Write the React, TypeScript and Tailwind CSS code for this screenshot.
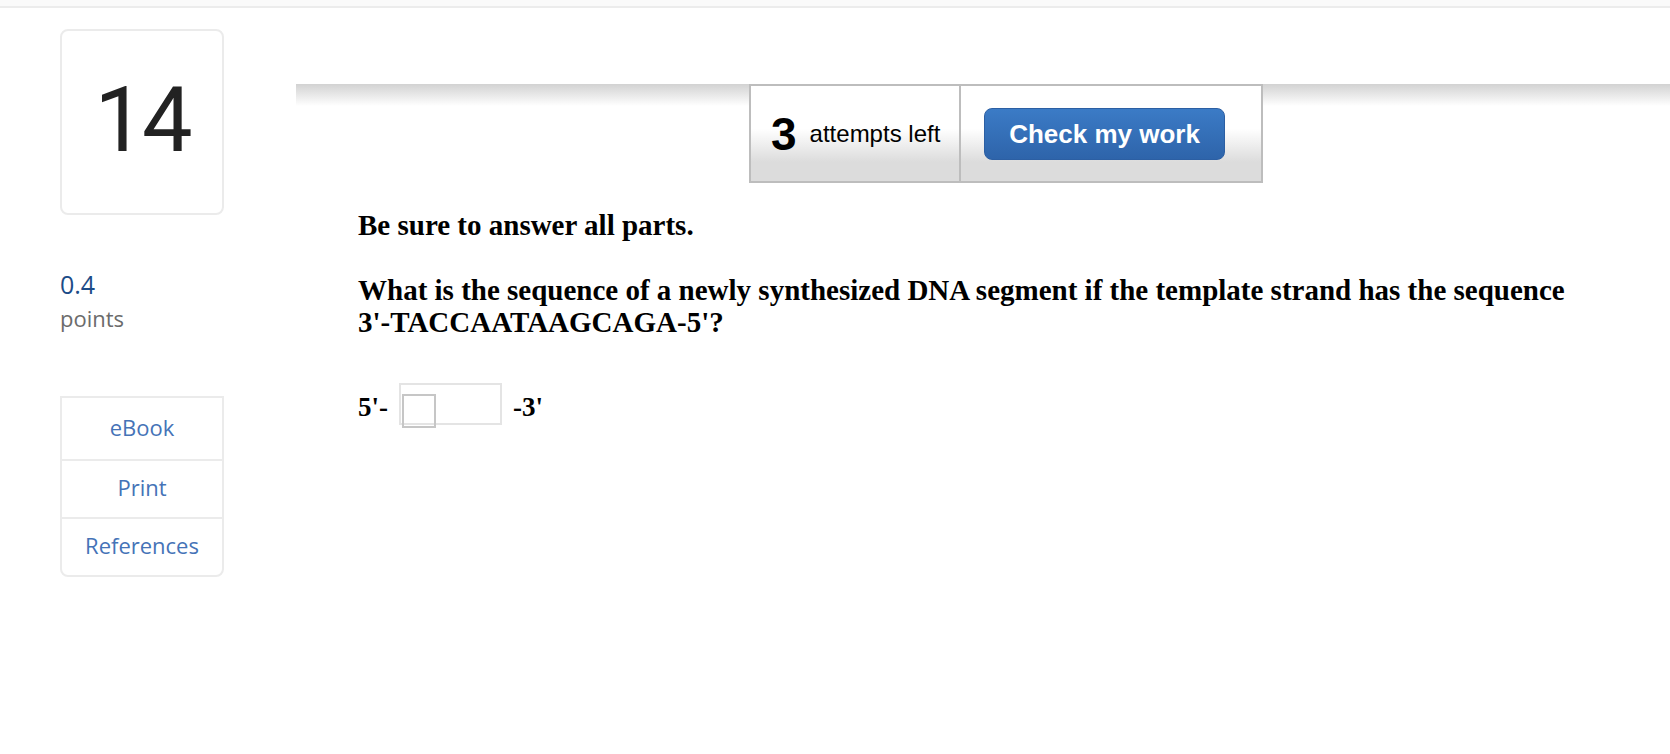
import React from 'react';

const sideFont = { fontFamily: '"Open Sans", "Noto Sans", sans-serif' };
const numFont = { fontFamily: 'Roboto, "Open Sans", sans-serif' };
const arial = { fontFamily: '"Liberation Sans", Arial, sans-serif' };
const times = { fontFamily: '"Liberation Serif", "Times New Roman", serif' };

const SideLinks: React.FC = () => {
  const links = [
    { label: 'eBook', h: 'h-[61px]' },
    { label: 'Print', h: 'h-[58px]' },
    { label: 'References', h: 'h-[58px]' },
  ];
  return (
    <div className="w-[164px] border-2 border-[#ebebeb] rounded-b-lg">
      {links.map((l, i) => (
        <div
          key={l.label}
          className={`${l.h} flex items-center justify-center pb-[3px] text-[22px] text-[#4573b7] ${i > 0 ? 'border-t-2 border-[#ebebeb]' : ''}`}
          style={sideFont}
        >
          {l.label}
        </div>
      ))}
    </div>
  );
};

export default function App() {
  return (
    <div className="min-h-screen w-full bg-white">
      {/* top strip */}
      <div className="h-[8px] bg-[#fafafa] border-b-2 border-[#ececec]" />

      <div className="flex">
        {/* left column */}
        <div className="ml-[60px] pt-[21px] w-[164px] shrink-0">
          <div className="h-[186px] w-[164px] rounded-lg border-2 border-[#ebebeb] flex items-center justify-center">
            <span className="text-[90px] font-normal leading-none tracking-[-3px] text-[#222] -mt-[2px]" style={numFont}>
              14
            </span>
          </div>
          <div className="mt-[54px] text-[25px] leading-[30px] text-[#1c4b87]" style={sideFont}>
            0.4
          </div>
          <div className="mt-[4px] text-[22px] leading-[30px] text-[#6b6b6b]" style={sideFont}>
            points
          </div>
          <div className="mt-[63px]">
            <SideLinks />
          </div>
        </div>

        {/* main column */}
        <div className="ml-[72px] flex-1 pt-[76px]">
          <div className="bg-[linear-gradient(to_bottom,#d2d2d2,#ffffff_22px)] pl-[453px]">
            <div className="flex h-[99px]">
              <div className="w-[212px] border-2 border-[#bdbdbd] bg-[linear-gradient(to_bottom,#ffffff_45%,#dcdcdc_80%)] flex items-center pl-[20px]" style={arial}>
                <span className="text-[46px] font-bold leading-none text-black">3</span>
                <span className="ml-[13px] text-[24px] text-black">attempts left</span>
              </div>
              <div className="w-[302px] border-2 border-l-0 border-[#bdbdbd] bg-[linear-gradient(to_bottom,#ffffff_45%,#dcdcdc_80%)] flex items-center pl-[23px] pt-[1px]">
                <button
                  className="h-[52px] w-[241px] rounded-lg border border-[#2c5fa3] bg-[linear-gradient(to_bottom,#3b7bc6,#2e64aa)] text-white text-[26px] font-bold"
                  style={arial}
                >
                  Check my work
                </button>
              </div>
            </div>
          </div>

          <div className="pl-[62px] pt-[26px] text-black font-bold" style={times}>
            <p className="text-[29px] leading-[32px]">Be sure to answer all parts.</p>
            <p className="mt-[33px] text-[29px] leading-[32px]">
              What is the sequence of a newly synthesized DNA segment if the template strand has the sequence{' '}
              <span className="whitespace-nowrap">3'-TACCAATAAGCAGA-5'?</span>
            </p>
            <div className="mt-[43px] flex items-center h-[46px] text-[27px]">
              <span className="pt-[6px] leading-[30px]">5'-</span>
              <div className="relative ml-[11px] h-[42px] w-[103px] border-2 border-[#e4e4e4]">
                <div className="absolute left-[1px] top-[9px] h-[34px] w-[34px] border-2 border-[#c6c6c6]" />
              </div>
              <span className="ml-[11px] pt-[6px] leading-[30px]">-3'</span>
            </div>
          </div>
        </div>
      </div>
    </div>
  );
}
